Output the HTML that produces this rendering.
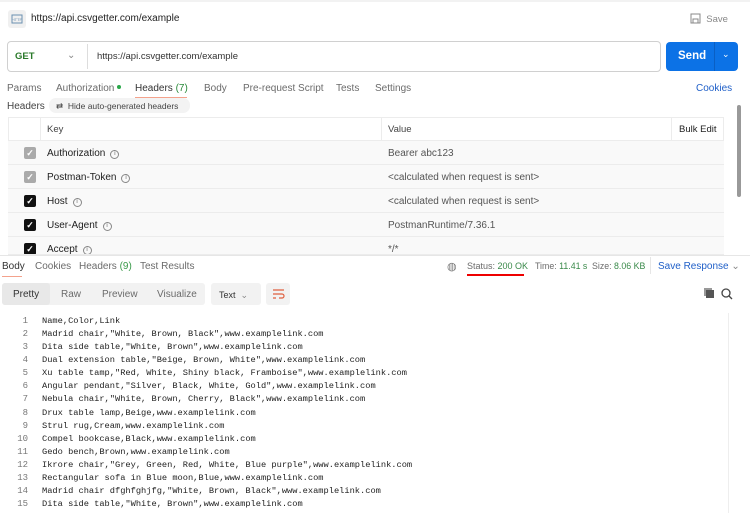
<!DOCTYPE html>
<html><head><style>
*{box-sizing:border-box;margin:0;padding:0}
body{width:750px;height:513px;overflow:hidden;background:#fff;font-family:"Liberation Sans",sans-serif;color:#212121;position:relative;font-size:10px}
.a{position:absolute;white-space:nowrap}
.g{color:#6b6b6b}
.row{position:absolute;left:8px;width:716px;height:24px;border-bottom:1px solid #ececec;background:#f9f9f9}
.row .k{position:absolute;left:39px;top:7px}
.row .v{position:absolute;left:380px;top:7px;color:#555}
.cb{position:absolute;left:16px;top:6px;width:12px;height:12px;border-radius:2px;color:#fff;font-size:9px;line-height:12px;text-align:center;font-weight:bold}
.i{display:inline-block;width:9px;height:9px;border:1px solid #888;border-radius:50%;font-size:6px;line-height:7px;text-align:center;color:#666;margin-left:5px;vertical-align:1px}
.code{position:absolute;left:0;top:315px;font-family:"Liberation Mono",monospace;font-size:8.7px;line-height:13.08px;color:#222}
.code div{white-space:pre}
.code span{display:inline-block;width:28px;text-align:right;color:#777;margin-right:14px;font-size:9px}
</style></head><body>
<div class="a" style="left:0;top:0;width:750px;height:2px;background:#f2f2f2"></div>
<div class="a" style="left:8px;top:10px;width:18px;height:18px;border-radius:3px;background:#f0f0f0"><svg width="18" height="18"><rect x="4" y="5" width="10" height="8" fill="none" stroke="#6a8fb0" stroke-width="1"/><text x="9" y="11" font-size="4" text-anchor="middle" fill="#6a8fb0">HTTP</text></svg></div>
<div class="a" style="left:31px;top:13px;font-size:10px">https://api.csvgetter.com/example</div>
<div class="a g" style="left:690px;top:13px;font-size:9.5px;color:#888"><svg width="11" height="11" style="vertical-align:-2px"><rect x="1" y="1" width="9" height="9" fill="none" stroke="#888"/><rect x="3" y="6" width="5" height="4" fill="none" stroke="#888"/></svg>&nbsp; Save</div>
<div class="a" style="left:7px;top:41px;width:654px;height:31px;border:1px solid #d0d0d0;border-radius:4px"></div>
<div class="a" style="left:15px;top:51px;color:#2a7a2a;font-weight:bold;font-size:9.5px">GET</div>
<div class="a" style="left:67px;top:50px;color:#888;font-size:10px">⌄</div>
<div class="a" style="left:87px;top:44px;width:1px;height:25px;background:#ddd"></div>
<div class="a" style="left:97px;top:51px;font-size:9.5px;color:#333">https://api.csvgetter.com/example</div>
<div class="a" style="left:666px;top:42px;width:72px;height:29px;background:#0c72e6;border-radius:4px"></div>
<div class="a" style="left:714px;top:42px;width:1px;height:29px;background:#0a5fc4"></div>
<div class="a" style="left:678px;top:50px;color:#fff;font-weight:bold;font-size:11.5px">Send</div>
<div class="a" style="left:722px;top:49px;color:#fff;font-size:9px">⌄</div>
<div class="a g" style="left:7px;top:83px">Params</div>
<div class="a g" style="left:56px;top:83px">Authorization <span style="display:inline-block;width:4px;height:4px;border-radius:50%;background:#2aa84a;vertical-align:2px"></span></div>
<div class="a" style="left:135px;top:83px;color:#333">Headers <span style="color:#2a8a3a">(7)</span></div>
<div class="a" style="left:135px;top:97px;width:52px;height:1px;background:#f4a28c"></div>
<div class="a g" style="left:204px;top:83px">Body</div>
<div class="a g" style="left:243px;top:83px">Pre-request Script</div>
<div class="a g" style="left:336px;top:83px">Tests</div>
<div class="a g" style="left:375px;top:83px">Settings</div>
<div class="a" style="left:696px;top:83px;color:#1f5fc8">Cookies</div>
<div class="a" style="left:7px;top:101px;color:#444">Headers</div>
<div class="a" style="left:49px;top:98px;width:141px;height:15px;background:#f3f3f3;border-radius:7px"></div>
<div class="a" style="left:56px;top:101px;color:#444;font-size:8.5px">⇄&nbsp; Hide auto-generated headers</div>
<div class="a" style="left:737px;top:105px;width:4px;height:92px;background:#999;border-radius:2px"></div>
<div class="a" style="left:8px;top:117px;width:716px;height:24px;border:1px solid #ececec;background:#fff"></div>
<div class="a" style="left:40px;top:117px;width:1px;height:138px;background:#ececec"></div>
<div class="a" style="left:381px;top:117px;width:1px;height:138px;background:#ececec"></div>
<div class="a" style="left:671px;top:117px;width:1px;height:24px;background:#ececec"></div>
<div class="a" style="left:47px;top:124px;color:#444;font-size:9.5px">Key</div>
<div class="a" style="left:388px;top:124px;color:#444;font-size:9.5px">Value</div>
<div class="a" style="left:679px;top:124px;color:#222;font-size:9.5px">Bulk Edit</div>
<div class="row" style="top:141px"><div class="cb" style="background:#aaa">✓</div><div class="k">Authorization<span class="i">i</span></div><div class="v">Bearer abc123</div></div>
<div class="row" style="top:165px"><div class="cb" style="background:#aaa">✓</div><div class="k">Postman-Token<span class="i">i</span></div><div class="v">&lt;calculated when request is sent&gt;</div></div>
<div class="row" style="top:189px"><div class="cb" style="background:#111">✓</div><div class="k">Host<span class="i">i</span></div><div class="v">&lt;calculated when request is sent&gt;</div></div>
<div class="row" style="top:213px"><div class="cb" style="background:#111">✓</div><div class="k">User-Agent<span class="i">i</span></div><div class="v">PostmanRuntime/7.36.1</div></div>
<div class="row" style="top:237px;height:18px;overflow:hidden"><div class="cb" style="background:#111">✓</div><div class="k">Accept<span class="i">i</span></div><div class="v">*/*</div></div>
<div class="a" style="left:0;top:255px;width:750px;height:1px;background:#e6e6e6"></div>
<div class="a" style="left:2px;top:261px;color:#333">Body</div>
<div class="a" style="left:2px;top:276px;width:20px;height:1px;background:#f4a28c"></div>
<div class="a g" style="left:35px;top:261px">Cookies</div>
<div class="a g" style="left:79px;top:261px">Headers <span style="color:#3a9a4a">(9)</span></div>
<div class="a g" style="left:140px;top:261px">Test Results</div>
<div class="a" style="left:447px;top:260px;color:#777;font-size:11px">◍</div>
<div class="a g" style="left:467px;top:261px;font-size:9px">Status: <span style="color:#3a8a4a">200 OK</span></div>
<div class="a" style="left:467px;top:274px;width:57px;height:1.5px;background:#e00"></div>
<div class="a g" style="left:535px;top:261px;font-size:8.8px">Time: <span style="color:#3a8a4a">11.41 s</span></div>
<div class="a g" style="left:592px;top:261px;font-size:8.8px">Size: <span style="color:#3a8a4a">8.06 KB</span></div>
<div class="a" style="left:650px;top:257px;width:1px;height:17px;background:#e6e6e6"></div>
<div class="a" style="left:658px;top:261px;color:#1f5fc8">Save Response <span style="color:#888">⌄</span></div>
<div class="a" style="left:2px;top:283px;width:203px;height:22px;background:#f2f2f2;border-radius:3px"></div>
<div class="a" style="left:2px;top:283px;width:48px;height:22px;background:#e8e8e8;border-radius:3px"></div>
<div class="a" style="left:13px;top:289px;color:#333">Pretty</div>
<div class="a g" style="left:61px;top:289px">Raw</div>
<div class="a g" style="left:102px;top:289px">Preview</div>
<div class="a g" style="left:157px;top:289px">Visualize</div>
<div class="a" style="left:211px;top:283px;width:50px;height:22px;background:#f2f2f2;border-radius:3px"></div>
<div class="a" style="left:219px;top:290px;color:#333;font-size:9px">Text &nbsp;<span style="color:#888">⌄</span></div>
<div class="a" style="left:266px;top:283px;width:24px;height:22px;background:#f2f2f2;border-radius:3px"></div>
<svg class="a" style="left:272px;top:289px" width="13" height="10"><path d="M1 1h11M1 5h9a2 2 0 0 1 0 4H7M1 9h3" stroke="#e06040" fill="none" stroke-width="1.2"/></svg>
<svg class="a" style="left:703px;top:287px" width="12" height="12"><rect x="1" y="1" width="8" height="8" fill="#999"/><rect x="3" y="3" width="8" height="8" fill="#555"/></svg>
<svg class="a" style="left:721px;top:288px" width="12" height="12"><circle cx="5" cy="5" r="4" stroke="#444" fill="none" stroke-width="1.3"/><path d="M8 8l3 3" stroke="#444" stroke-width="1.3"/></svg>
<div class="a" style="left:728px;top:313px;width:1px;height:200px;background:#eee"></div>
<div class="code">
<div><span>1</span>Name,Color,Link</div>
<div><span>2</span>Madrid chair,"White, Brown, Black",www.examplelink.com</div>
<div><span>3</span>Dita side table,"White, Brown",www.examplelink.com</div>
<div><span>4</span>Dual extension table,"Beige, Brown, White",www.examplelink.com</div>
<div><span>5</span>Xu table tamp,"Red, White, Shiny black, Framboise",www.examplelink.com</div>
<div><span>6</span>Angular pendant,"Silver, Black, White, Gold",www.examplelink.com</div>
<div><span>7</span>Nebula chair,"White, Brown, Cherry, Black",www.examplelink.com</div>
<div><span>8</span>Drux table lamp,Beige,www.examplelink.com</div>
<div><span>9</span>Strul rug,Cream,www.examplelink.com</div>
<div><span>10</span>Compel bookcase,Black,www.examplelink.com</div>
<div><span>11</span>Gedo bench,Brown,www.examplelink.com</div>
<div><span>12</span>Ikrore chair,"Grey, Green, Red, White, Blue purple",www.examplelink.com</div>
<div><span>13</span>Rectangular sofa in Blue moon,Blue,www.examplelink.com</div>
<div><span>14</span>Madrid chair dfghfghjfg,"White, Brown, Black",www.examplelink.com</div>
<div><span>15</span>Dita side table,"White, Brown",www.examplelink.com</div>
</div>
</body></html>
